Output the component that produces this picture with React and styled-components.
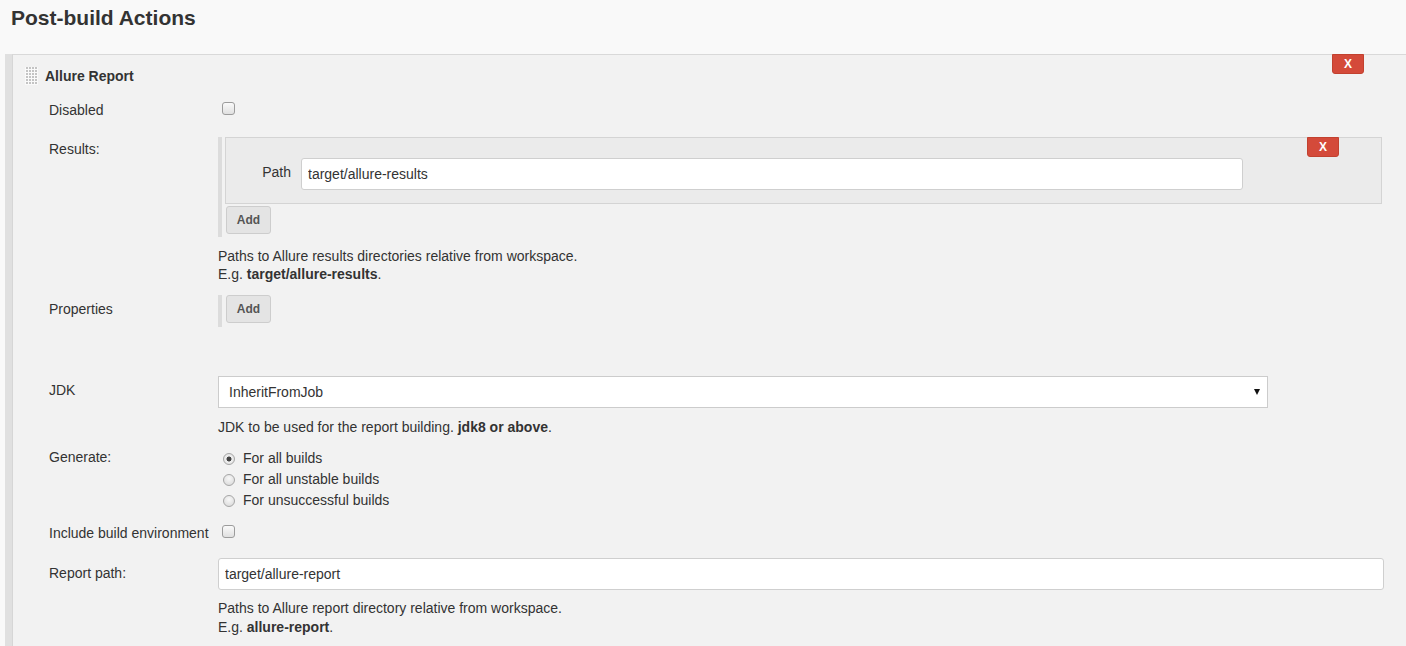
import React from "react";
import styled, { createGlobalStyle } from "styled-components";

const Global = createGlobalStyle`
  html, body { margin: 0; padding: 0; background: #f9f9f9; }
  body { font-family: "Liberation Sans", Arial, sans-serif; font-size: 14px; color: #333; }
  * { box-sizing: border-box; }
`;

const Page = styled.div`
  width: 1406px;
  height: 646px;
  overflow: hidden;
  background: #f9f9f9;
`;

const PageHeader = styled.h2`
  margin: 0;
  height: 54px;
  padding: 6px 0 0 11px;
  font-size: 21px;
  line-height: 24px;
  font-weight: bold;
  color: #333;
`;

const Gutter = styled.div`
  padding-left: 5px;
  display: flex;
`;

const Section = styled.div`
  flex: 1;
  border-left: 7px solid #e0e0e0;
  min-height: 600px;
`;

const Panel = styled.div`
  position: relative;
  background: #f2f2f2;
  border-left: 1px solid #d6d6d6;
  border-top: 1px solid #d9d9d9;
  padding: 9px 22px 20px 0;
  min-height: 600px;
`;

const DeleteButton = styled.button`
  position: absolute;
  top: ${(p) => p.$top}px;
  right: ${(p) => p.$right}px;
  width: 32px;
  height: 20px;
  padding: 0;
  border: 1px solid #c2412f;
  border-radius: 0 0 3px 3px;
  background: #d44a3a;
  color: #fff;
  font-family: "Liberation Sans", Arial, sans-serif;
  font-size: 12px;
  font-weight: bold;
  line-height: 18px;
`;

const TitleRow = styled.div`
  display: flex;
  align-items: center;
  height: 24px;
  gap: 7px;
  padding-left: 12px;
`;

const Grip = styled.span`
  width: 13px;
  height: 18px;
  display: inline-flex;
  align-items: center;
  justify-content: center;
  background: #fafafa;
`;

const Title = styled.span`
  font-weight: bold;
  font-size: 14px;
`;

const Row = styled.div`
  display: flex;
  align-items: ${(p) => (p.$center ? "center" : "flex-start")};
  margin-top: ${(p) => p.$mt || 0}px;
  min-height: ${(p) => p.$h || 0}px;
`;

const Label = styled.div`
  width: 205px;
  flex: none;
  padding-left: 36px;
  padding-top: ${(p) => p.$pt || 0}px;
  line-height: ${(p) => p.$lh || 15}px;
`;

const Value = styled.div`
  flex: 1;
  min-width: 0;
`;

const Help = styled.div`
  margin: ${(p) => p.$mt || 0}px 0 0 205px;
  line-height: ${(p) => p.$lh || 18}px;
  b { font-weight: bold; }
`;

const Checkbox = styled.input.attrs({ type: "checkbox" })`
  appearance: none;
  margin: 0 0 0 4px;
  width: 13px;
  height: 13px;
  border: 1px solid #9c9c9c;
  border-radius: 3px;
  background: linear-gradient(#fafafa, #e0e0e0);
`;

const Repeated = styled.div`
  border-left: 4px solid #dcdcdc;
  padding: 0 0 ${(p) => p.$pb || 0}px 3px;
`;

const Chunk = styled.div`
  position: relative;
  background: #ebebeb;
  border: 1px solid #d4d4d4;
  padding: 20px 138px 13px 0;
  margin-right: 2px;
  display: flex;
  align-items: center;
`;

const ChunkLabel = styled.div`
  width: 75px;
  text-align: right;
  padding-right: 10px;
  flex: none;
  margin-top: -4px;
`;

const TextInput = styled.input`
  flex: 1;
  width: 100%;
  height: ${(p) => p.$h || 32}px;
  border: 1px solid #cfcfcf;
  border-radius: 3px;
  background: #fff;
  padding: 0 6px;
  font-family: "Liberation Sans", Arial, sans-serif;
  font-size: 14px;
  color: #333;
  outline: none;
`;

const AddButton = styled.button`
  display: block;
  margin: ${(p) => p.$mt || 0}px 0 0 1px;
  width: 45px;
  height: 28px;
  padding: 0;
  border: 1px solid #cdcdcd;
  border-radius: 3px;
  background: #e4e4e4;
  color: #555;
  font-family: "Liberation Sans", Arial, sans-serif;
  font-size: 12px;
  font-weight: bold;
`;

const SelectWrap = styled.div`
  position: relative;
  width: 1050px;
`;

const Select = styled.select`
  appearance: none;
  width: 100%;
  height: 32px;
  border: 1px solid #cccccc;
  border-radius: 0;
  background: #fff;
  padding: 0 10px;
  font-family: "Liberation Sans", Arial, sans-serif;
  font-size: 14px;
  color: #333;
  outline: none;
`;

const Caret = styled.span`
  position: absolute;
  right: 8px;
  top: 13px;
  width: 0;
  height: 0;
  border-left: 3.5px solid transparent;
  border-right: 3.5px solid transparent;
  border-top: 6px solid #111;
  pointer-events: none;
`;

const RadioList = styled.div`
  display: flex;
  flex-direction: column;
`;

const RadioLine = styled.label`
  display: flex;
  align-items: center;
  height: 21px;
  gap: 8px;
`;

const Radio = styled.input.attrs({ type: "radio" })`
  appearance: none;
  margin: 3px 0 0 5px;
  width: 12px;
  height: 12px;
  border: 1px solid #a6a6a6;
  border-radius: 50%;
  background: radial-gradient(circle at 50% 35%, #f8f8f8, #d6d6d6);
  position: relative;
  &:checked {
    background: radial-gradient(circle, #444 0 2.2px, #f0f0f0 2.8px, #dadada);
  }
`;

const GripIcon = () => (
  <svg width="12" height="18" viewBox="0 0 12 18">
    {Array.from({ length: 6 }).map((_, r) =>
      Array.from({ length: 4 }).map((_, c) => (
        <rect key={`${r}-${c}`} x={c * 3} y={r * 3} width="2" height="2" fill="#c4c4c4" />
      ))
    )}
  </svg>
);

export default function App() {
  return (
    <Page>
      <Global />
      <PageHeader>Post-build Actions</PageHeader>
      <Gutter>
        <Section>
          <Panel>
            <DeleteButton $top={-1} $right={42}>X</DeleteButton>
            <TitleRow>
              <Grip><GripIcon /></Grip>
              <Title>Allure Report</Title>
            </TitleRow>

            <Row $center $mt={10} $h={24}>
              <Label>Disabled</Label>
              <Value><Checkbox /></Value>
            </Row>

            <Row $mt={15}>
              <Label $pt={5}>Results:</Label>
              <Value>
                <Repeated $pb={3}>
                  <Chunk>
                    <DeleteButton $top={-1} $right={42}>X</DeleteButton>
                    <ChunkLabel>Path</ChunkLabel>
                    <TextInput defaultValue="target/allure-results" />
                  </Chunk>
                  <AddButton $mt={2}>Add</AddButton>
                </Repeated>
              </Value>
            </Row>
            <Help $mt={10}>
              Paths to Allure results directories relative from workspace.
              <br />
              E.g. <b>target/allure-results</b>.
            </Help>

            <Row $mt={12}>
              <Label $pt={7}>Properties</Label>
              <Value>
                <Repeated $pb={4}>
                  <AddButton>Add</AddButton>
                </Repeated>
              </Value>
            </Row>

            <Row $mt={49}>
              <Label $pt={7}>JDK</Label>
              <Value>
                <SelectWrap>
                  <Select defaultValue="InheritFromJob">
                    <option>InheritFromJob</option>
                  </Select>
                  <Caret />
                </SelectWrap>
              </Value>
            </Row>
            <Help $mt={10}>
              JDK to be used for the report building. <b>jdk8 or above</b>.
            </Help>

            <Row $mt={11}>
              <Label $pt={1} $lh={18}>Generate:</Label>
              <Value>
                <RadioList>
                  <RadioLine><Radio name="gen" defaultChecked />For all builds</RadioLine>
                  <RadioLine><Radio name="gen" />For all unstable builds</RadioLine>
                  <RadioLine><Radio name="gen" />For unsuccessful builds</RadioLine>
                </RadioList>
              </Value>
            </Row>

            <Row $center $mt={11} $h={24}>
              <Label>Include build environment</Label>
              <Value><Checkbox /></Value>
            </Row>

            <Row $mt={13}>
              <Label $pt={8}>Report path:</Label>
              <Value>
                <TextInput defaultValue="target/allure-report" />
              </Value>
            </Row>
            <Help $mt={9} $lh={19}>
              Paths to Allure report directory relative from workspace.
              <br />
              E.g. <b>allure-report</b>.
            </Help>
          </Panel>
        </Section>
      </Gutter>
    </Page>
  );
}
